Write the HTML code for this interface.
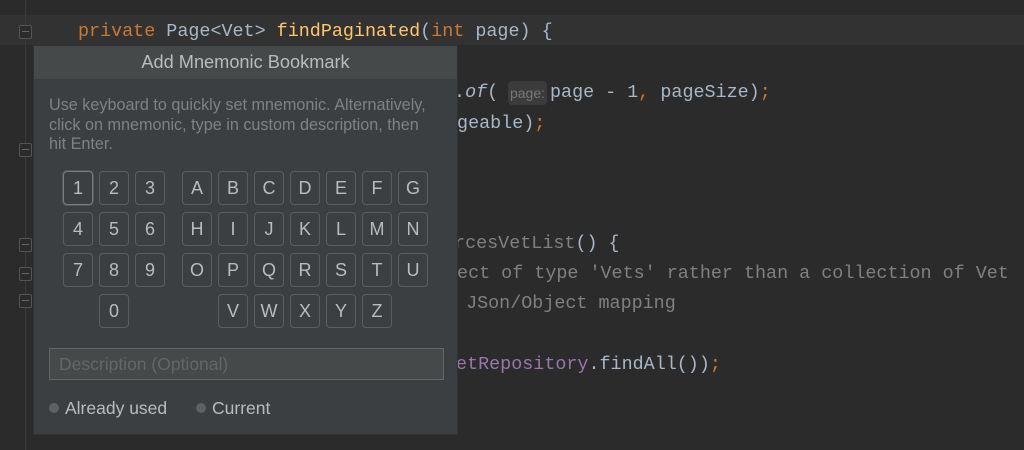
<html><head><style>
body{margin:0;width:1024px;height:450px;background:#2b2b2b;position:relative;overflow:hidden;font-family:"Liberation Sans",sans-serif}
.cl{position:absolute;left:0;top:15px;width:1024px;height:30px;background:#323232}
.c{position:absolute;font-family:"Liberation Mono",monospace;font-size:18.4px;color:#a9b7c6;white-space:pre;line-height:20px}
.k{color:#cc7832}.m{color:#ffc66d}.g{color:#808080}.p{color:#9876aa}
.gl{position:absolute;left:25px;top:0;width:1px;height:450px;background:#3a3a3a}
.fold{position:absolute;left:19px;width:11px;height:12px;border:1px solid #555;border-radius:2px;background:#2b2b2b}
.fold:after{content:"";position:absolute;left:2px;right:2px;top:5px;height:1px;background:#666}
.pop{position:absolute;left:33px;top:45px;width:425px;height:390px;background:#3c3f41;border:1px solid #2f3133;box-sizing:border-box}
.tt{height:33px;background:#45494a;color:#bbb;font-size:18.2px;text-align:center;line-height:33px}
.desc{position:absolute;left:15px;top:50px;width:400px;color:#7f8183;font-size:16.2px;line-height:19.5px;white-space:nowrap}
.key{position:absolute;width:28px;height:32px;border:1px solid #5b5e60;border-radius:4px;color:#bbb;font-size:18px;text-align:center;line-height:32px}
.in{position:absolute;left:15px;top:302px;border:1px solid #646464;background:#45494a;color:#666;font-size:17.5px;line-height:30px;padding-left:9px;box-sizing:border-box;width:395px;height:32px}
.lg{position:absolute;top:352px;color:#bbb;font-size:17.5px}
.dot{display:inline-block;width:10px;height:10px;border-radius:50%;background:#5e6062;margin-right:6px;vertical-align:1px}
</style></head><body>
<div class="cl"></div>
<div class="gl"></div>
<div class="fold" style="top:25px"></div>
<div class="fold" style="top:143px"></div>
<div class="fold" style="top:238px"></div>
<div class="fold" style="top:267px"></div>
<div class="fold" style="top:294px"></div>
<div class="c" style="left:78px;top:22px"><span class="k">private</span> Page&lt;Vet&gt; <span class="m">findPaginated</span>(<span class="k">int</span> page) {</div>
<div class="c" style="left:443px;top:83px">t.<i>of</i>(</div>
<div style="position:absolute;left:508px;top:81px;width:39px;height:24px;background:#3b3b3b;border-radius:4px;color:#787878;font-size:14px;line-height:24px;text-align:center">page:</div>
<div class="c" style="left:550px;top:83px">page - 1<span class="k">,</span> pageSize)<span class="k">;</span></div>
<div class="c" style="left:446px;top:114px">ageable)<span class="k">;</span></div>
<div class="c" style="left:443px;top:234px"><span class="g">urcesVetList</span>() {</div>
<div class="c g" style="left:446px;top:264px">ject of type 'Vets' rather than a collection of Vet</div>
<div class="c g" style="left:444px;top:294px">r JSon/Object mapping</div>
<div class="c" style="left:445px;top:355px"><span class="p">vetRepository</span>.findAll())<span class="k">;</span></div>
<div class="pop">
<div class="tt">Add Mnemonic Bookmark</div>
<div class="desc">Use keyboard to quickly set mnemonic. Alternatively,<br>click on mnemonic, type in custom description, then<br>hit Enter.</div>
<div class="key" style="left:29px;top:125px;border-color:#7a7d80;box-shadow:0 0 0 1px #555">1</div>
<div class="key" style="left:65px;top:125px">2</div>
<div class="key" style="left:101px;top:125px">3</div>
<div class="key" style="left:148px;top:125px">A</div><div class="key" style="left:184px;top:125px">B</div><div class="key" style="left:220px;top:125px">C</div><div class="key" style="left:256px;top:125px">D</div><div class="key" style="left:292px;top:125px">E</div><div class="key" style="left:328px;top:125px">F</div><div class="key" style="left:364px;top:125px">G</div>
<div class="key" style="left:29px;top:166px">4</div><div class="key" style="left:65px;top:166px">5</div><div class="key" style="left:101px;top:166px">6</div>
<div class="key" style="left:148px;top:166px">H</div><div class="key" style="left:184px;top:166px">I</div><div class="key" style="left:220px;top:166px">J</div><div class="key" style="left:256px;top:166px">K</div><div class="key" style="left:292px;top:166px">L</div><div class="key" style="left:328px;top:166px">M</div><div class="key" style="left:364px;top:166px">N</div>
<div class="key" style="left:29px;top:207px">7</div><div class="key" style="left:65px;top:207px">8</div><div class="key" style="left:101px;top:207px">9</div>
<div class="key" style="left:148px;top:207px">O</div><div class="key" style="left:184px;top:207px">P</div><div class="key" style="left:220px;top:207px">Q</div><div class="key" style="left:256px;top:207px">R</div><div class="key" style="left:292px;top:207px">S</div><div class="key" style="left:328px;top:207px">T</div><div class="key" style="left:364px;top:207px">U</div>
<div class="key" style="left:65px;top:248px">0</div>
<div class="key" style="left:184px;top:248px">V</div><div class="key" style="left:220px;top:248px">W</div><div class="key" style="left:256px;top:248px">X</div><div class="key" style="left:292px;top:248px">Y</div><div class="key" style="left:328px;top:248px">Z</div>
<div class="in">Description (Optional)</div>
<div class="lg" style="left:15px"><span class="dot"></span>Already used</div>
<div class="lg" style="left:162px"><span class="dot"></span>Current</div>
</div>
</body></html>
